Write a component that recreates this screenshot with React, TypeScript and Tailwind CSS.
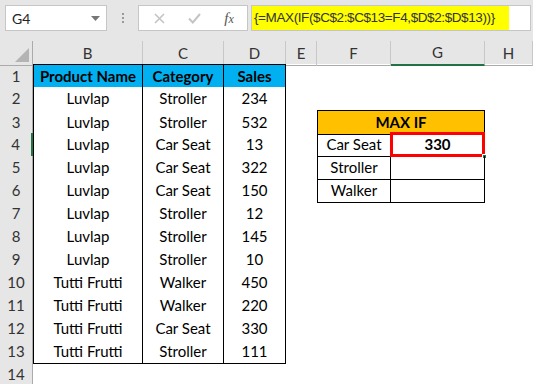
import React from 'react'

const gridCols = 'grid grid-cols-[33px_110px_81px_62px_31px_74px_94px_1fr]'

const sales: [string, string, number][] = [
  ['Luvlap', 'Stroller', 234],
  ['Luvlap', 'Stroller', 532],
  ['Luvlap', 'Car Seat', 13],
  ['Luvlap', 'Car Seat', 322],
  ['Luvlap', 'Car Seat', 150],
  ['Luvlap', 'Stroller', 12],
  ['Luvlap', 'Stroller', 145],
  ['Luvlap', 'Stroller', 10],
  ['Tutti Frutti', 'Walker', 450],
  ['Tutti Frutti', 'Walker', 220],
  ['Tutti Frutti', 'Car Seat', 330],
  ['Tutti Frutti', 'Stroller', 111],
]

const maxIf: Record<number, string> = { 4: 'Car Seat', 5: 'Stroller', 6: 'Walker' }

function ColHeader({ label, active }: { label: string; active?: boolean }) {
  return (
    <div
      className={`flex items-center justify-center border-r border-[#c8c8c8] text-[15px] text-[#333] ${
        active ? 'border-b-2 border-b-[#217346]' : 'border-b border-b-[#ababab]'
      }`}
    >
      {label}
    </div>
  )
}

function SheetRow({ n }: { n: number }) {
  const inTable = n <= 13
  const header = n === 1
  const item = n >= 2 && n <= 13 ? sales[n - 2] : null
  const cell = `flex items-center justify-center border-r border-b border-black ${header ? 'border-t bg-[#00b0f0] font-bold' : 'bg-white'}`

  return (
    <div className={`${gridCols} h-[23px]`}>
      <div
        className={`flex items-center justify-center bg-[#e6e6e6] border-b border-b-[#d2d2d2] text-[15px] text-[#333] ${
          n === 4 ? 'border-r-2 border-r-[#217346]' : 'border-r border-r-[#ababab]'
        }`}
      >
        {n}
      </div>

      {/* B:D data table */}
      {inTable ? (
        <>
          <div className={`${cell} border-l`}>{header ? 'Product Name' : item?.[0]}</div>
          <div className={cell}>{header ? 'Category' : item?.[1]}</div>
          <div className={cell}>{header ? 'Sales' : item?.[2]}</div>
        </>
      ) : (
        <>
          <div />
          <div />
          <div />
        </>
      )}

      <div />

      {/* F:G MAX IF table */}
      {n === 3 ? (
        <div className="col-span-2 flex items-center justify-center border border-black bg-[#ffc000] font-bold">
          MAX IF
        </div>
      ) : maxIf[n] ? (
        <>
          <div className="flex items-center justify-center border-l border-r border-b border-black">{maxIf[n]}</div>
          <div className="relative flex items-center justify-center border-r border-b border-black font-bold">
            {n === 4 && (
              <>
                <span>330</span>
                <div className="absolute -left-[1px] -top-[1px] h-[25px] w-[95px] border-[3px] border-[#ff0000]" />
                <div className="absolute -bottom-[3px] -right-[3px] h-[5px] w-[5px] border border-white bg-[#217346]" />
              </>
            )}
          </div>
        </>
      ) : (
        <>
          <div />
          <div />
        </>
      )}

      <div />
    </div>
  )
}

export default function App() {
  return (
    <div
      className="h-[384px] w-[533px] overflow-hidden bg-white text-[15px] text-black"
      style={{ fontFamily: 'Lato, "Liberation Sans", sans-serif' }}
    >
      {/* Name box + formula bar */}
      <div className="flex h-[41px] items-start bg-[#e6e6e6] pl-[5px] pt-[5px]">
        <div className="flex h-[26px] w-[102px] items-center justify-between border border-[#c6c6c6] bg-white pl-[6px] pr-[6px] text-[14px] text-[#222]">
          <span>G4</span>
          <svg width="9" height="5" viewBox="0 0 9 5">
            <path d="M0 0 L9 0 L4.5 5 Z" fill="#777" />
          </svg>
        </div>
        <div className="flex h-[26px] w-[31px] flex-col items-center justify-center gap-[2px]">
          <span className="h-[2px] w-[2px] bg-[#9a9a9a]" />
          <span className="h-[2px] w-[2px] bg-[#9a9a9a]" />
          <span className="h-[2px] w-[2px] bg-[#9a9a9a]" />
        </div>
        <div className="flex h-[26px] w-[110px] items-center border border-[#c6c6c6] bg-white">
          <div className="flex w-[38px] justify-center pl-[2px]">
            <svg width="11" height="11" viewBox="0 0 11 11">
              <path d="M1 1 L10 10 M10 1 L1 10" stroke="#c4c4c4" strokeWidth="1.6" />
            </svg>
          </div>
          <div className="flex w-[34px] justify-center">
            <svg width="13" height="11" viewBox="0 0 13 11">
              <path d="M1 5.5 L4.8 9.5 L12 1" stroke="#c4c4c4" strokeWidth="2" fill="none" />
            </svg>
          </div>
          <div className="flex flex-1 justify-center">
            <span
              className="italic text-[15px] text-[#555]"
              style={{ fontFamily: '"Liberation Serif", serif' }}
            >
              f<span className="text-[12px]">x</span>
            </span>
          </div>
        </div>
        <div className="ml-[3px] flex h-[26px] w-[280px] items-stretch border border-[#c6c6c6] bg-white">
          <div
            className="flex w-[257px] items-center bg-[#ffff00] pl-[2px] text-[13.5px] tracking-[-0.4px] text-[#333]"
            style={{ fontFamily: '"Liberation Sans", sans-serif' }}
          >
            {'{=MAX(IF($C$2:$C$13=F4,$D$2:$D$13))}'}
          </div>
        </div>
      </div>

      {/* Column headers */}
      <div className={`${gridCols} h-[23px] bg-[#e6e6e6]`}>
        <div className="relative border-r border-b border-[#ababab]">
          <svg className="absolute bottom-[3px] right-[3px]" width="14" height="14" viewBox="0 0 14 14">
            <path d="M14 0 L14 14 L0 14 Z" fill="#b4b4b4" />
          </svg>
        </div>
        <ColHeader label="B" />
        <ColHeader label="C" />
        <ColHeader label="D" />
        <ColHeader label="E" />
        <ColHeader label="F" />
        <ColHeader label="G" active />
        <ColHeader label="H" />
      </div>

      {Array.from({ length: 14 }, (_, i) => (
        <SheetRow key={i} n={i + 1} />
      ))}
    </div>
  )
}
